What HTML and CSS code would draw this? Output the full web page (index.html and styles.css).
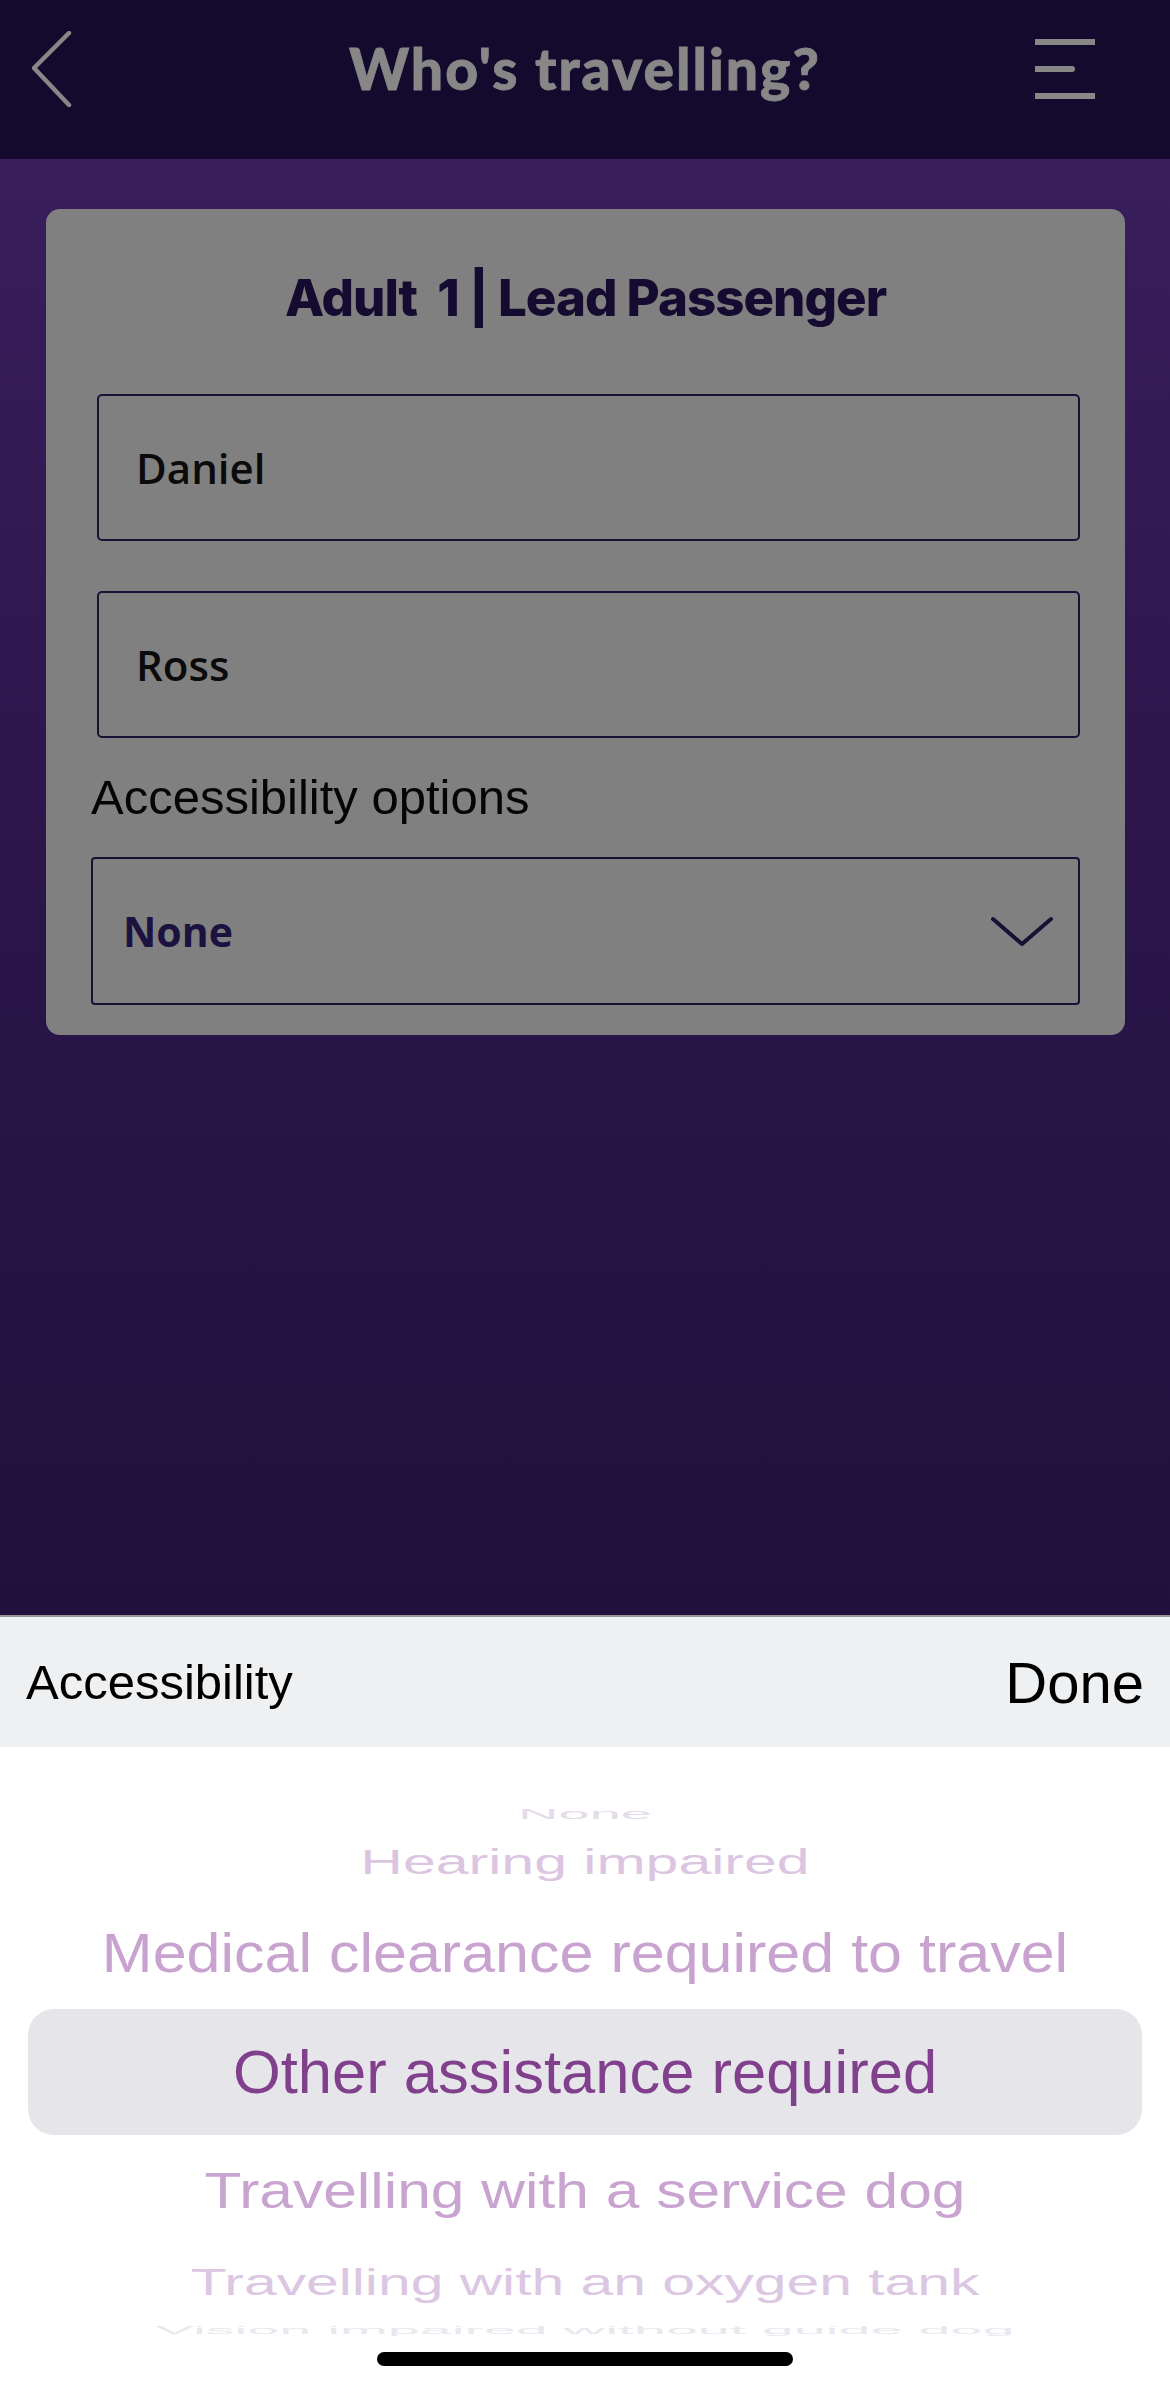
FILE: index.html
```html
<!DOCTYPE html>
<html lang="en">
<head>
<meta charset="utf-8">
<title>Who's travelling?</title>
<link rel="stylesheet" href="styles.css">
</head>
<body>
<div class="screen">
  <header class="topbar">
    <button class="icon-btn back" aria-label="Back">
      <svg width="40" height="76" viewBox="0 0 40 76"><polyline points="37,2 2,37 37,74" fill="none" stroke="#878787" stroke-width="4.5" stroke-linecap="round" stroke-linejoin="round"/></svg>
    </button>
    <h1 class="title">Who's travelling?</h1>
    <button class="icon-btn menu" aria-label="Menu">
      <span class="bar"></span>
      <span class="bar short"></span>
      <span class="bar"></span>
    </button>
  </header>

  <main class="content">
    <section class="card">
      <h2 class="card-title">Adult&nbsp; 1 | Lead Passenger</h2>
      <div class="field first">Daniel</div>
      <div class="field">Ross</div>
      <label class="field-label">Accessibility options</label>
      <div class="select">
        <span class="select-value">None</span>
        <svg class="chev" width="64" height="32" viewBox="0 0 64 32"><polyline points="3,4 32,29 61,4" fill="none" stroke="#1a1035" stroke-width="4" stroke-linecap="round" stroke-linejoin="round"/></svg>
      </div>
    </section>
  </main>

  <section class="sheet">
    <div class="toolbar">
      <span class="toolbar-title">Accessibility</span>
      <span class="toolbar-done">Done</span>
    </div>
    <div class="picker">
      <div class="row r-none"><span>None</span></div>
      <div class="row r-hearing"><span>Hearing impaired</span></div>
      <div class="row r-medical"><span>Medical clearance required to travel</span></div>
      <div class="row r-other"><span>Other assistance required</span></div>
      <div class="row r-dog"><span>Travelling with a service dog</span></div>
      <div class="row r-oxygen"><span>Travelling with an oxygen tank</span></div>
      <div class="row r-vision"><span>Vision impaired without guide dog</span></div>
      <div class="home-indicator"></div>
    </div>
  </section>
</div>
</body>
</html>
```
FILE: styles.css
```css
* { box-sizing: border-box; }
html, body { margin: 0; padding: 0; }
body { width: 1170px; height: 2393px; overflow: hidden; background: #fff; font-family: "Liberation Sans", Arial, sans-serif; }
.screen { display: flex; flex-direction: column; height: 2393px; }

.topbar {
  height: 159px;
  background: #130a2d;
  display: grid;
  grid-template-columns: 1fr auto 1fr;
  align-items: center;
  padding: 0 32px 22px 32px;
}
.icon-btn { background: none; border: 0; padding: 0; margin: 0; cursor: pointer; }
.back { justify-self: start; display: flex; }
.title {
  margin: 0;
  font-family: Lato, "Open Sans", sans-serif;
  font-weight: 900;
  font-size: 57px;
  line-height: 1;
  color: #878787;
  letter-spacing: 2px;
  -webkit-text-stroke: 0.8px #878787;
}
.menu { justify-self: end; margin-right: 43px; width: 60px; height: 60px; display: flex; flex-direction: column; justify-content: space-between; align-items: flex-start; }
.bar { display: block; width: 60px; height: 6px; background: #878787; }
.bar.short { width: 40px; border-radius: 0 3px 3px 0; }

.content {
  height: 1456px;
  background: linear-gradient(180deg, #381e5c 0%, #2b1549 50%, #21103d 100%);
  padding: 50px 45px 0 46px;
}
.card {
  background: #808080;
  border-radius: 14px;
  padding: 58px 45px 30px 45px;
  display: flex;
  flex-direction: column;
}
.card-title {
  margin: 0;
  text-align: center;
  font-family: Inter, "Open Sans", sans-serif;
  font-weight: 800;
  font-size: 51px;
  line-height: 1.2;
  letter-spacing: -1px;
  color: #150b30;
}
.field {
  margin-left: 6px;
  height: 147px;
  border: 2px solid #1a1035;
  border-radius: 5px;
  display: flex;
  align-items: center;
  padding-left: 37px;
  font-family: "Open Sans", sans-serif;
  font-weight: 600;
  font-size: 42px;
  color: #0b0b0b;
  margin-top: 50px;
}
.field.first { margin-top: 66px; }
.field-label {
  margin-top: 31px;
  font-size: 49px;
  line-height: 56px;
  color: #050505;
}
.select {
  margin-top: 32px;
  height: 148px;
  border: 2px solid #1a1035;
  border-radius: 4px;
  display: flex;
  align-items: center;
  justify-content: space-between;
  padding: 0 24px 0 30px;
}
.select-value {
  font-family: "Open Sans", sans-serif;
  font-weight: 700;
  font-size: 41px;
  color: #1c1240;
}
.chev { display: block; }

.sheet { flex: 1; display: flex; flex-direction: column; background: #fff; }
.toolbar {
  border-top: 2px solid #96959c;
  height: 132px;
  background: #eff0f2;
  display: flex;
  align-items: center;
  justify-content: space-between;
  padding: 0 26px;
  color: #000;
}
.toolbar-title { font-size: 49px; }
.toolbar-done { font-size: 58px; }

.picker { flex: 1; padding-top: 42px; display: flex; flex-direction: column; align-items: stretch; }
.row { text-align: center; white-space: nowrap; }
.row span { display: inline-block; transform-origin: 50% 50%; }
.r-none { height: 49px; line-height: 49px; font-size: 56px; color: #e6dce9; }
.r-none span { transform: scaleY(0.27); }
.r-hearing { height: 48px; line-height: 48px; font-size: 59px; color: #dcc5e1; }
.r-hearing span { transform: scaleY(0.6); }
.r-medical { margin-top: 11px; height: 112px; line-height: 112px; font-size: 61px; color: #c9a3d0; }
.r-medical span { transform: scaleY(0.92); }
.r-other { height: 126px; line-height: 126px; font-size: 61.5px; color: #81408c; background: #e5e5ea; border-radius: 26px; margin: 0 28px; }
.r-dog { height: 110px; line-height: 110px; font-size: 60.5px; color: #c9a4d0; }
.r-dog span { transform: scaleY(0.84); }
.r-oxygen { height: 74px; line-height: 74px; font-size: 58.8px; color: #dcc7e3; }
.r-oxygen span { transform: scaleY(0.64); }
.r-vision { height: 22px; line-height: 22px; font-size: 57.5px; color: #ebe7ee; }
.r-vision span { transform: scaleY(0.2); }
.home-indicator { margin: 11px auto 0; width: 416px; height: 14px; border-radius: 7px; background: #000; }
```
